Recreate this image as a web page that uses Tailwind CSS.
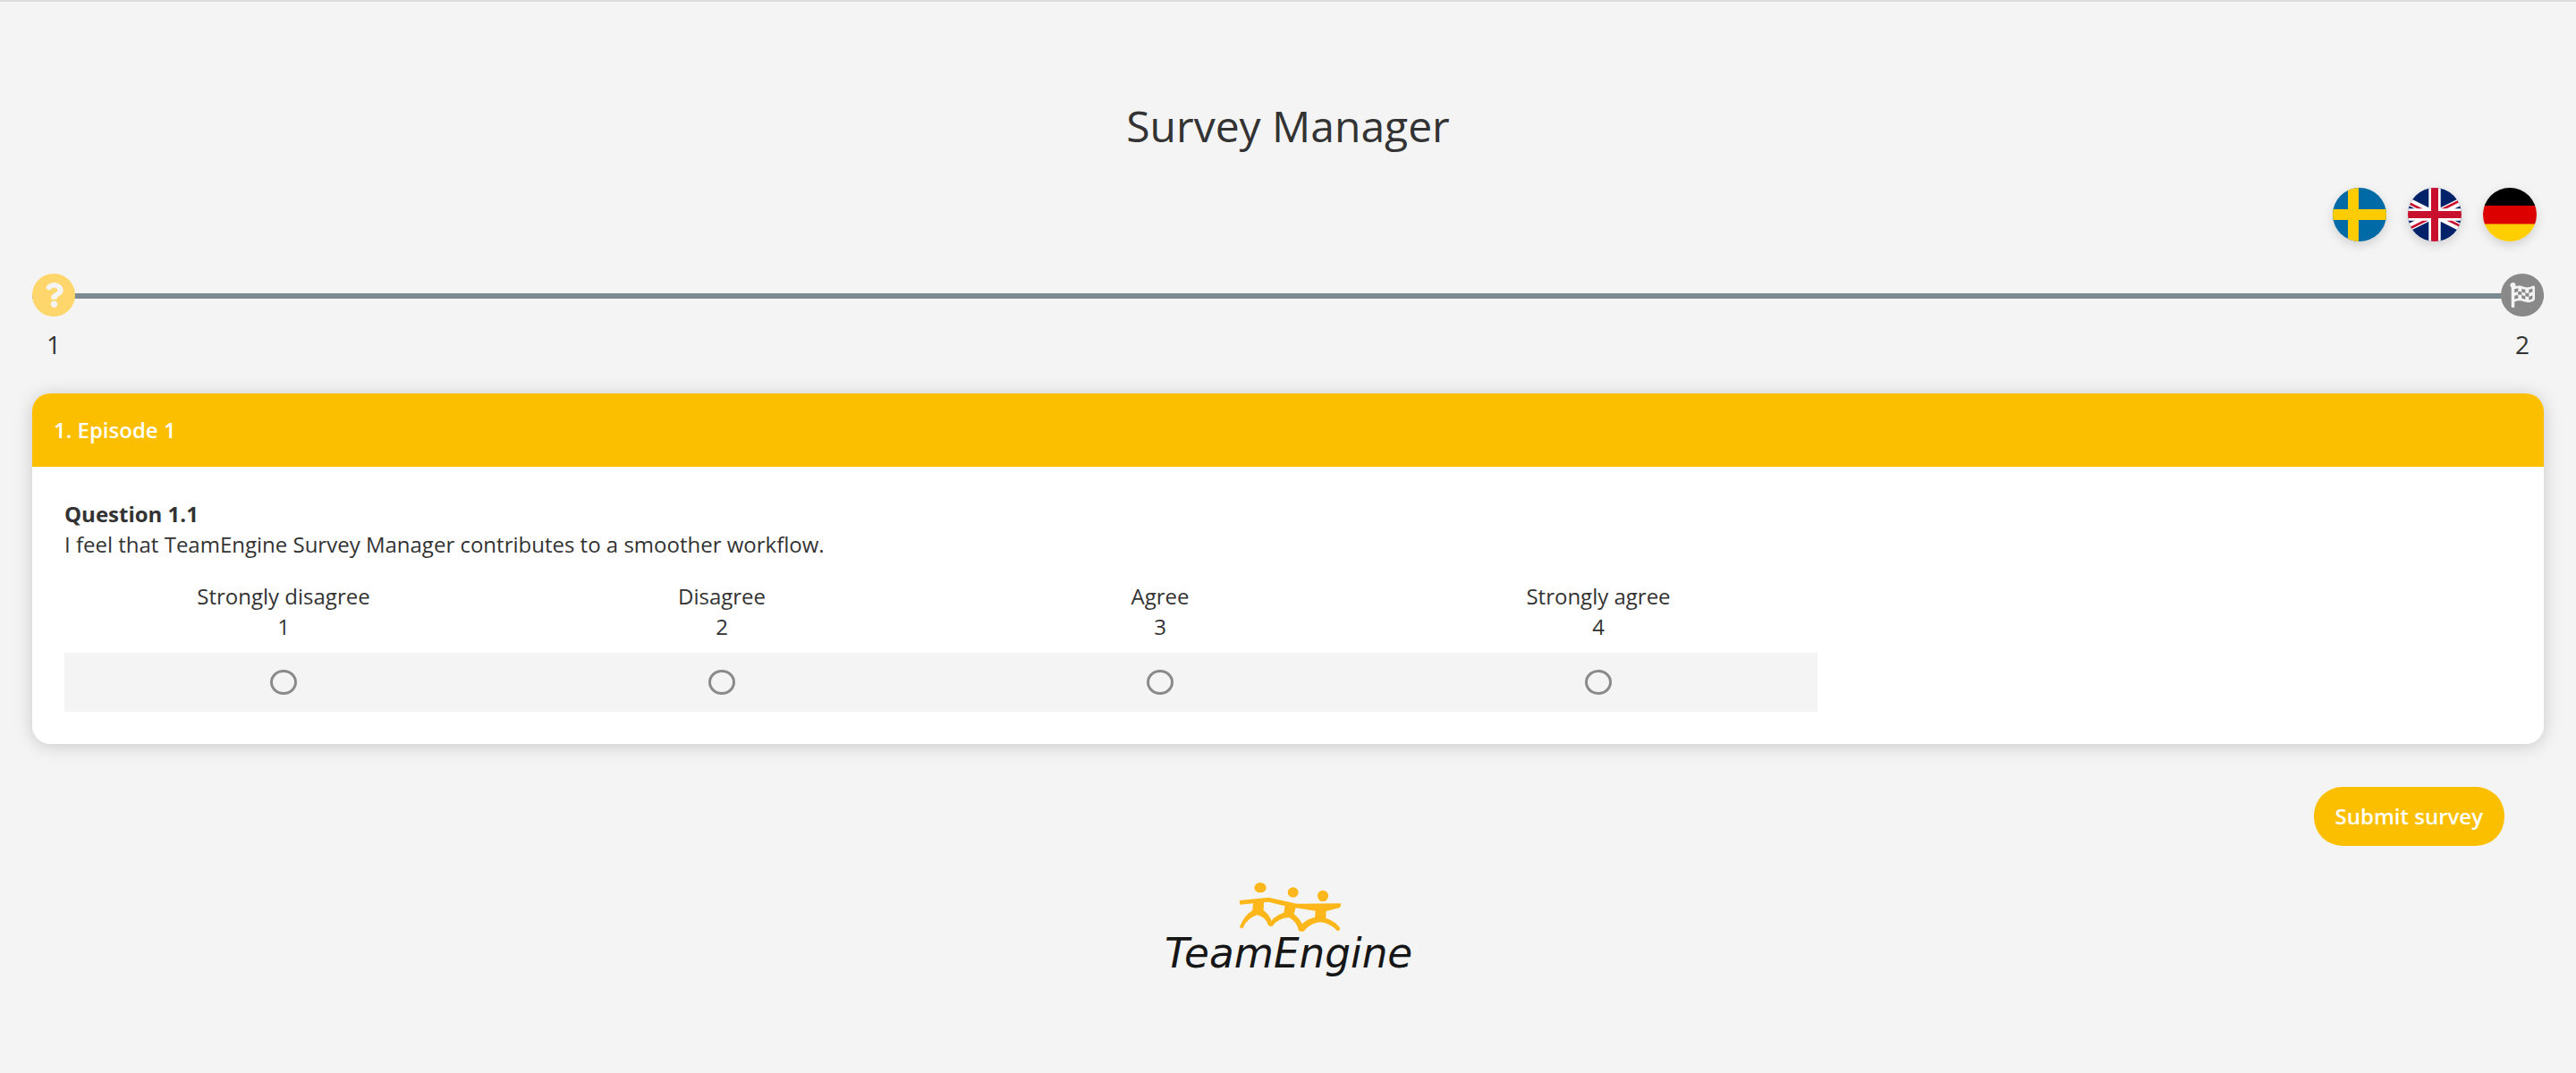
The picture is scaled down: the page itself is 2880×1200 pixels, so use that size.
<!DOCTYPE html>
<html lang="en">
<head>
<meta charset="utf-8">
<meta name="viewport" content="width=device-width, initial-scale=1">
<title>Survey Manager</title>
<script src="https://cdn.jsdelivr.net/npm/@tailwindcss/browser@4"></script>
</head>
<body class="border-t-2 border-[#dddddd] bg-[#f4f4f4] px-9 pb-12 font-['Open_Sans',sans-serif] text-[24px] leading-[34px] text-[#333333]">
<header class="pt-[106px]">
  <h1 class="text-center text-[48px] leading-[66px]">Survey Manager</h1>
  <nav aria-label="Language" class="mt-9 flex justify-end gap-6 pr-2">
    <a href="#sv" aria-label="Svenska" class="block size-[60px] rounded-full shadow-[0_4px_12px_rgba(0,0,0,0.15)]">
      <svg viewBox="0 0 60 60" class="size-full rounded-full"><path fill="#006aa7" d="M0 0h60v60H0z"/><path fill="#fecc00" d="M17 0h12v60H17zM0 24h60v12H0z"/></svg>
    </a>
    <a href="#en" aria-label="English" class="block size-[60px] rounded-full shadow-[0_4px_12px_rgba(0,0,0,0.15)]">
      <svg viewBox="0 0 60 60" class="size-full rounded-full"><path fill="#012169" d="M0 0h60v60H0z"/><path stroke="#fff" stroke-width="8" d="M-30 0 90 60M90 0-30 60"/><path fill="#c8102e" d="M-10 10 30 30V33L-10 13zM70 7 30 27V30L70 10zM30 27 70 47V50L30 30zM30 30-10 50V53L30 33z"/><path fill="#fff" d="M23.300 0h13.400v60H23.300zM0 23.300h60v13.400H0z"/><path fill="#c8102e" d="M26 0h8v60h-8zM0 26h60v8H0z"/></svg>
    </a>
    <a href="#de" aria-label="Deutsch" class="block size-[60px] rounded-full shadow-[0_4px_12px_rgba(0,0,0,0.15)]">
      <svg viewBox="0 0 60 60" class="size-full rounded-full"><path d="M0 0h60v20H0z"/><path fill="#dd0000" d="M0 20h60v21H0z"/><path fill="#ffce00" d="M0 40.500h60V60H0z"/></svg>
    </a>
  </nav>
</header>
<main>
  <ol class="mt-9 flex justify-between bg-[linear-gradient(#7d8991,#7d8991)] bg-[length:100%_6px] bg-[position:0_22px] bg-no-repeat text-[28px] leading-[38px]">
    <li class="flex w-12 flex-col items-center gap-3">
      <span class="flex size-12 items-center justify-center rounded-full bg-[#ffd66b]"><svg viewBox="0 0 384 512" class="h-7 fill-[#f4f4f4]"><path d="M202.021 0C122.202 0 70.503 32.703 29.914 91.026c-7.363 10.580-5.093 25.086 5.178 32.874l43.138 32.709c10.373 7.865 25.132 6.026 33.253-4.148 25.049-31.381 43.630-49.449 82.757-49.449 30.764 0 68.816 19.799 68.816 49.631 0 22.552-18.617 34.134-48.993 51.164-35.423 19.860-82.299 44.576-82.299 106.405V320c0 13.255 10.745 24 24 24h72.471c13.255 0 24-10.745 24-24v-5.773c0-42.860 125.268-44.645 125.268-160.627C377.504 66.256 286.902 0 202.021 0zM192 373.459c-38.196 0-69.271 31.075-69.271 69.271 0 38.195 31.075 69.270 69.271 69.270s69.271-31.075 69.271-69.271-31.075-69.270-69.271-69.270z"/></svg></span>
      <span>1</span>
    </li>
    <li class="flex w-12 flex-col items-center gap-3">
      <span class="flex size-12 items-center justify-center rounded-full bg-[#898989]"><svg viewBox="0 0 512 512" class="h-7 fill-[#f4f4f4]"><path d="M243.200 189.900V258c26.100 5.900 49.300 15.600 73.600 22.300v-68.200c-26-5.800-49.400-15.500-73.600-22.200zm223.300-123c-34.300 15.900-76.500 31.900-117 31.900C296 98.800 251.700 64 184.300 64c-25 0-47.300 4.400-68 12 2.800-7.300 4.100-15.200 3.600-23.600C118.100 24 94.800 1.200 66.300 0 34.300-1.300 8 24.300 8 56c0 19 9.500 35.800 24 45.900V488c0 13.300 10.700 24 24 24h16c13.300 0 24-10.700 24-24v-94.400c28.300-12.100 63.600-22.100 114.400-22.100 53.600 0 97.800 34.800 165.200 34.800 48.200 0 86.700-16.300 122.500-40.900 8.700-6 13.800-15.800 13.800-26.400V95.900c.1-23.300-24.200-38.800-45.400-29zM169.600 325.500c-25.800 2.700-50 8.200-73.600 16.600v-70.500c26.200-9.300 47.500-15 73.600-17.400v71.300zM464 191c-23.600 9.800-46.300 19.500-73.600 23.900V286c24.800-3.400 51.400-11.800 73.600-26v70.500c-25.100 16.100-48.500 24.700-73.600 27.100V286c-27 3.700-47.900 1.500-73.600-5.600v67.400c-23.900-7.400-47.300-16.700-73.600-21.300V258c-19.700-4.400-40.800-6.800-73.600-3.800v-70c-22.400 3.100-44.600 10.200-73.600 20.900v-70.500c33.200-12.200 50.100-19.800 73.600-22v71.600c27-3.700 48.400-1.300 73.600 5.700v-67.400c23.700 7.400 47.200 16.700 73.600 21.300v68.400c23.700 5.300 47.600 6.900 73.600 2.700V143c27.100-4.800 52.300-13.600 73.600-22.500z"/></svg></span>
      <span>2</span>
    </li>
  </ol>
  <form>
    <section class="mt-9 overflow-hidden rounded-[20px] bg-white shadow-[0_2px_20px_rgba(0,0,0,0.18)]">
      <h2 class="bg-[#fcbf00] px-6 py-6 font-semibold text-white">1. Episode 1</h2>
      <div class="p-9">
        <h3 class="font-bold">Question 1.1</h3>
        <p id="q1">I feel that TeamEngine Survey Manager contributes to a smoother workflow.</p>
        <table aria-labelledby="q1" class="mt-6 w-full max-w-[1960px] table-fixed text-center">
          <thead>
            <tr>
              <th scope="col" class="pb-3 font-normal"><label for="a1">Strongly disagree<br>1</label></th>
              <th scope="col" class="pb-3 font-normal"><label for="a2">Disagree<br>2</label></th>
              <th scope="col" class="pb-3 font-normal"><label for="a3">Agree<br>3</label></th>
              <th scope="col" class="pb-3 font-normal"><label for="a4">Strongly agree<br>4</label></th>
            </tr>
          </thead>
          <tbody>
            <tr class="h-[66px] bg-[#f4f4f4]">
              <td><input id="a1" type="radio" name="q1" class="mx-auto block h-7 w-[30px] appearance-none rounded-[50%] border-3 border-[#8a8a8a] checked:bg-[#fcbf00]"></td>
              <td><input id="a2" type="radio" name="q1" class="mx-auto block h-7 w-[30px] appearance-none rounded-[50%] border-3 border-[#8a8a8a] checked:bg-[#fcbf00]"></td>
              <td><input id="a3" type="radio" name="q1" class="mx-auto block h-7 w-[30px] appearance-none rounded-[50%] border-3 border-[#8a8a8a] checked:bg-[#fcbf00]"></td>
              <td><input id="a4" type="radio" name="q1" class="mx-auto block h-7 w-[30px] appearance-none rounded-[50%] border-3 border-[#8a8a8a] checked:bg-[#fcbf00]"></td>
            </tr>
          </tbody>
        </table>
      </div>
    </section>
    <div class="mt-12 flex justify-end pr-11">
      <button type="submit" class="rounded-[32px] bg-[#fcbf00] px-6 py-4 font-semibold text-white">Submit survey</button>
    </div>
  </form>
</main>
<footer class="mt-6 flex justify-center">
  <svg viewBox="0 0 960 420" class="w-80" role="img" aria-label="TeamEngine">
    <g fill="#fdb71a">
      <ellipse cx="387" cy="68" rx="20" ry="17"/>
      <ellipse cx="497" cy="84" rx="18" ry="17"/>
      <ellipse cx="597" cy="96" rx="18" ry="19"/>
      <path d="M317 111 415 101 510 122 657 121Q659 130 652 136L608 147 607 170Q640 182 655 204Q655 213 645 213Q620 186 587 184Q555 188 535 212Q526 219 516 212Q508 180 483 168Q445 172 430 195Q422 202 414 194Q405 166 376 160Q344 170 329 203Q322 207 318 200Q330 165 361 144L363 121 319 125zM399 117 398 144Q418 160 424 179Q440 160 466 152L470 130 415 116zM506 136 500 156Q518 170 528 190Q545 172 570 168L572 146z" fill-rule="evenodd"/>
    </g>
    <text x="66" y="335" class="fill-[#161616] font-['DejaVu_Sans',sans-serif] text-[136px] italic">TeamEngine</text>
  </svg>
</footer>
</body>
</html>
